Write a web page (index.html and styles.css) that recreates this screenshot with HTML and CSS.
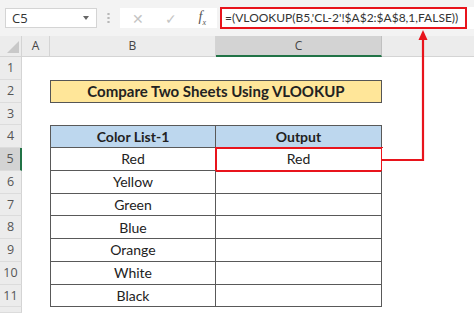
FILE: index.html
```html
<!DOCTYPE html>
<html lang="en">
<head>
	<meta charset="utf-8">
	<title>Compare Two Sheets Using VLOOKUP</title>
	<link rel="stylesheet" href="styles.css">
</head>
<body>
	<div class="app">
		<div class="topbar">
			<div class="namebox">
				<span>C5</span>
				<span class="caret"></span>
			</div>
			<div class="grip"></div>
			<div class="fxbox">
				<span class="fx-btn">&#x2715;</span>
				<span class="fx-btn">&#x2713;</span>
				<span class="fx-btn fx">f<sub>x</sub></span>
			</div>
			<div class="formula">
				<div class="formula-text">=(VLOOKUP(B5,'CL-2'!$A$2:$A$8,1,FALSE))</div>
			</div>
		</div>

		<div class="sheet">
			<div class="corner"><span class="tri"></span></div>
			<div class="colhead">A</div>
			<div class="colhead">B</div>
			<div class="colhead active">C</div>
			<div class="colhead rest"></div>

			<!-- row 1 -->
			<div class="rowhead">1</div>
			<div class="cell"></div><div class="cell"></div><div class="cell"></div><div class="cell"></div>

			<!-- row 2 -->
			<div class="rowhead">2</div>
			<div class="cell"></div>
			<div class="title">Compare Two Sheets Using VLOOKUP</div>
			<div class="cell"></div>

			<!-- row 3 -->
			<div class="rowhead">3</div>
			<div class="cell"></div><div class="cell"></div><div class="cell"></div><div class="cell"></div>

			<!-- row 4 -->
			<div class="rowhead">4</div>
			<div class="cell"></div>
			<div class="td th first">Color List-1</div>
			<div class="td th">Output</div>
			<div class="cell"></div>

			<!-- row 5 -->
			<div class="rowhead active">5</div>
			<div class="cell"></div>
			<div class="td first">Red</div>
			<div class="td selected">Red</div>
			<div class="cell"></div>

			<div class="rowhead">6</div>
			<div class="cell"></div>
			<div class="td first">Yellow</div>
			<div class="td"></div>
			<div class="cell"></div>

			<div class="rowhead">7</div>
			<div class="cell"></div>
			<div class="td first">Green</div>
			<div class="td"></div>
			<div class="cell"></div>

			<div class="rowhead">8</div>
			<div class="cell"></div>
			<div class="td first">Blue</div>
			<div class="td"></div>
			<div class="cell"></div>

			<div class="rowhead">9</div>
			<div class="cell"></div>
			<div class="td first">Orange</div>
			<div class="td"></div>
			<div class="cell"></div>

			<div class="rowhead">10</div>
			<div class="cell"></div>
			<div class="td first">White</div>
			<div class="td"></div>
			<div class="cell"></div>

			<div class="rowhead">11</div>
			<div class="cell"></div>
			<div class="td first">Black</div>
			<div class="td"></div>
			<div class="cell"></div>

			<div class="rowhead"></div>
		</div>

		<!-- arrow from the formula bar down to C5 -->
		<svg class="arrow" width="60" height="140" viewBox="0 0 60 140">
			<path d="M43 8 V131 H2" fill="none" stroke="#e8141c" stroke-width="2.2"/>
			<polygon points="43,1 38.5,11 47.5,11" fill="#e8141c"/>
		</svg>
	</div>
</body>
</html>
```

FILE: styles.css
```css
* {
	box-sizing: border-box;
}
body {
	margin: 0;
	background: #fff;
	font-family: "Open Sans", "Noto Sans", sans-serif;
}
.app {
	position: relative;
	width: 474px;
	height: 313px;
	overflow: hidden;
}

/* formula bar */
.topbar {
	height: 36px;
	background: #f3f3f3;
	display: flex;
	align-items: center;
	padding: 0 0 0 5px;
}
.namebox {
	width: 92px;
	height: 20px;
	background: #fff;
	border: 1px solid #d4d4d4;
	display: flex;
	align-items: center;
	justify-content: space-between;
	padding: 0 7px 0 6px;
	font-size: 13px;
	color: #333;
}
.caret {
	width: 0;
	height: 0;
	border-left: 3.5px solid transparent;
	border-right: 3.5px solid transparent;
	border-top: 4px solid #666;
}
.grip {
	width: 23px;
	height: 12px;
	background: radial-gradient(circle, #b8b8b8 1px, transparent 1.3px) center top / 3px 4px repeat-y;
}
.fxbox {
	width: 97px;
	height: 20px;
	background: #fff;
	display: flex;
	align-items: center;
	justify-content: space-between;
	padding: 0 11px 0 12px;
	color: #c4c4c4;
	font-size: 14px;
}
.fx-btn.fx {
	color: #555;
	font-family: "Liberation Serif", serif;
	font-style: italic;
	font-size: 14px;
}
.fx sub {
	font-size: 8px;
}
.formula {
	flex: 1;
	height: 22px;
	margin-left: 3px;
	background: #fff;
}
.formula-text {
	width: 247px;
	height: 22px;
	border: 2px solid #e8141c;
	padding-left: 3px;
	font-family: Lato, "Open Sans", sans-serif;
	font-size: 12px;
	line-height: 18px;
	color: #333;
	white-space: nowrap;
}

/* grid */
.sheet {
	display: grid;
	grid-template-columns: 22px 28px 166px 166px 1fr;
	grid-template-rows: 21px repeat(11, 22.75px) 1fr;
	height: 277px;
}
.corner {
	background: #ececec;
	border-right: 1px solid #d4d4d4;
	border-bottom: 1px solid #d4d4d4;
	position: relative;
}
.tri {
	position: absolute;
	right: 2px;
	bottom: 3px;
	width: 0;
	height: 0;
	border-left: 12px solid transparent;
	border-bottom: 12px solid #c8c8c8;
}
.colhead {
	background: #ececec;
	border-right: 1px solid #d4d4d4;
	border-bottom: 1px solid #d4d4d4;
	font-size: 12px;
	color: #444;
	text-align: center;
	line-height: 20px;
}
.colhead.active {
	background: #d3d3d3;
	border-bottom: 2px solid #217346;
	border-right-color: #c0c0c0;
}
.colhead.rest {
	border-right: 0;
}
.rowhead {
	background: #ececec;
	border-right: 1px solid #d4d4d4;
	border-bottom: 1px solid #dcdcdc;
	font-size: 12.5px;
	color: #555;
	text-align: center;
	line-height: 22px;
}
.rowhead.active {
	background: #d3d3d3;
	border-right: 2px solid #217346;
}
.cell {
	background: #fff;
}

.title,
.td {
	font-family: Lato, "Liberation Sans", sans-serif;
	font-size: 14px;
	color: #222;
	display: flex;
	align-items: center;
	justify-content: center;
}
.title {
	grid-column: span 2;
	background: #ffe699;
	border: 1.5px solid #555;
	font-weight: bold;
	font-size: 15px;
}
.td {
	border-right: 1.5px solid #595959;
	border-bottom: 1.5px solid #595959;
}
.td.first {
	border-left: 1.5px solid #595959;
}
.th {
	background: #bdd7ee;
	border-top: 1.5px solid #595959;
	font-weight: bold;
}
.selected {
	outline: 2px solid #e8141c;
	outline-offset: -1px;
}

.arrow {
	position: absolute;
	left: 380px;
	top: 29px;
}
```
